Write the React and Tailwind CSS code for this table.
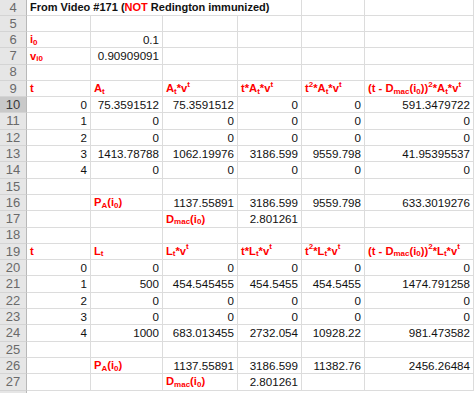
const font = { fontFamily: '"Liberation Sans", Arial, sans-serif' };

function Sub({ children }) {
    return <span className="relative top-[3px] text-[8px] leading-none">{children}</span>;
}

function Sup({ children }) {
    return <span className="relative -top-[4px] text-[8px] leading-none">{children}</span>;
}

const red = (node) => ({ red: true, node });

const I0 = () => <>(i<Sub>0</Sub>)</>;

const hdrA = [
    red('t'),
    red(<>A<Sub>t</Sub></>),
    red(<>A<Sub>t</Sub>*v<Sup>t</Sup></>),
    red(<>t*A<Sub>t</Sub>*v<Sup>t</Sup></>),
    red(<>t<Sup>2</Sup>*A<Sub>t</Sub>*v<Sup>t</Sup></>),
    red(<>(t - D<Sub>mac</Sub><I0 />)<Sup>2</Sup>*A<Sub>t</Sub>*v<Sup>t</Sup></>),
];

const hdrL = [
    red('t'),
    red(<>L<Sub>t</Sub></>),
    red(<>L<Sub>t</Sub>*v<Sup>t</Sup></>),
    red(<>t*L<Sub>t</Sub>*v<Sup>t</Sup></>),
    red(<>t<Sup>2</Sup>*L<Sub>t</Sub>*v<Sup>t</Sup></>),
    red(<>(t - D<Sub>mac</Sub><I0 />)<Sup>2</Sup>*L<Sub>t</Sub>*v<Sup>t</Sup></>),
];

const pa = red(<>P<Sub>A</Sub><I0 /></>);
const dmac = red(<>D<Sub>mac</Sub><I0 /></>);

const rows = [
    { n: 5, cells: [] },
    { n: 6, cells: [red(<>i<Sub>0</Sub></>), '0.1'] },
    { n: 7, cells: [red(<>v<Sub>i0</Sub></>), '0.90909091'] },
    { n: 8, cells: [] },
    { n: 9, cells: hdrA },
    { n: 10, cells: ['0', '75.3591512', '75.3591512', '0', '0', '591.3479722'], sel: true },
    { n: 11, cells: ['1', '0', '0', '0', '0', '0'] },
    { n: 12, cells: ['2', '0', '0', '0', '0', '0'] },
    { n: 13, cells: ['3', '1413.78788', '1062.19976', '3186.599', '9559.798', '41.95395537'] },
    { n: 14, cells: ['4', '0', '0', '0', '0', '0'] },
    { n: 15, cells: [] },
    { n: 16, cells: ['', pa, '1137.55891', '3186.599', '9559.798', '633.3019276'] },
    { n: 17, cells: ['', '', dmac, '2.801261'] },
    { n: 18, cells: [] },
    { n: 19, cells: hdrL },
    { n: 20, cells: ['0', '0', '0', '0', '0', '0'] },
    { n: 21, cells: ['1', '500', '454.545455', '454.5455', '454.5455', '1474.791258'] },
    { n: 22, cells: ['2', '0', '0', '0', '0', '0'] },
    { n: 23, cells: ['3', '0', '0', '0', '0', '0'] },
    { n: 24, cells: ['4', '1000', '683.013455', '2732.054', '10928.22', '981.473582'] },
    { n: 25, cells: [] },
    { n: 26, cells: ['', pa, '1137.55891', '3186.599', '11382.76', '2456.26484'] },
    { n: 27, cells: ['', '', dmac, '2.801261'] },
];

function RowHead({ n, sel, first }) {
    return (
        <div
            className={`${first ? 'h-[15.7px]' : 'h-[16.3px]'} flex items-center justify-center border-b border-r border-b-[#d4d4d4] border-r-[#b8b8b8] text-[13px] ${sel ? 'bg-[#c9c9c9] text-[#3a3a3a]' : 'bg-[#e6e6e6] text-[#6a6a6a]'}`}
        >
            {n}
        </div>
    );
}

function Cell({ v }) {
    const isRed = v && typeof v === 'object' && v.red;
    return (
        <div
            className={`h-[16.3px] border-b border-r border-[#dcdcdc] px-[3px] flex items-center whitespace-nowrap overflow-visible ${isRed ? 'justify-start text-[#ff0000] font-bold text-[11.2px]' : 'justify-end text-[#111111] text-[11.6px]'}`}
        >
            {isRed ? v.node : v}
        </div>
    );
}

export default function App() {
    return (
        <div className="w-[474px] h-[393px] overflow-hidden bg-white" style={font}>
            <div className="grid grid-cols-[27px_64px_72px_75px_64px_63px_1fr]">
                {/* row 4: title spills across A-D */}
                <RowHead n={4} first />
                <div className="col-span-4 h-[15.7px] border-b border-r border-[#dcdcdc] px-[3px] flex items-center whitespace-nowrap text-[11px] font-bold text-[#111111]">
                    From Video #171 (<span className="text-[#ff0000]">NOT</span>&nbsp;Redington immunized)
                </div>
                <div className="h-[15.7px] border-b border-r border-[#dcdcdc]" />
                <div className="h-[15.7px] border-b border-r border-[#dcdcdc]" />

                {rows.map((r) => (
                    <div key={r.n} className="contents">
                        <RowHead n={r.n} sel={r.sel} />
                        {[0, 1, 2, 3, 4, 5].map((i) => (
                            <Cell key={i} v={r.cells[i]} />
                        ))}
                    </div>
                ))}
                <div className="h-[16.3px] bg-[#e6e6e6] border-r border-[#b8b8b8]" />
            </div>
        </div>
    );
}
